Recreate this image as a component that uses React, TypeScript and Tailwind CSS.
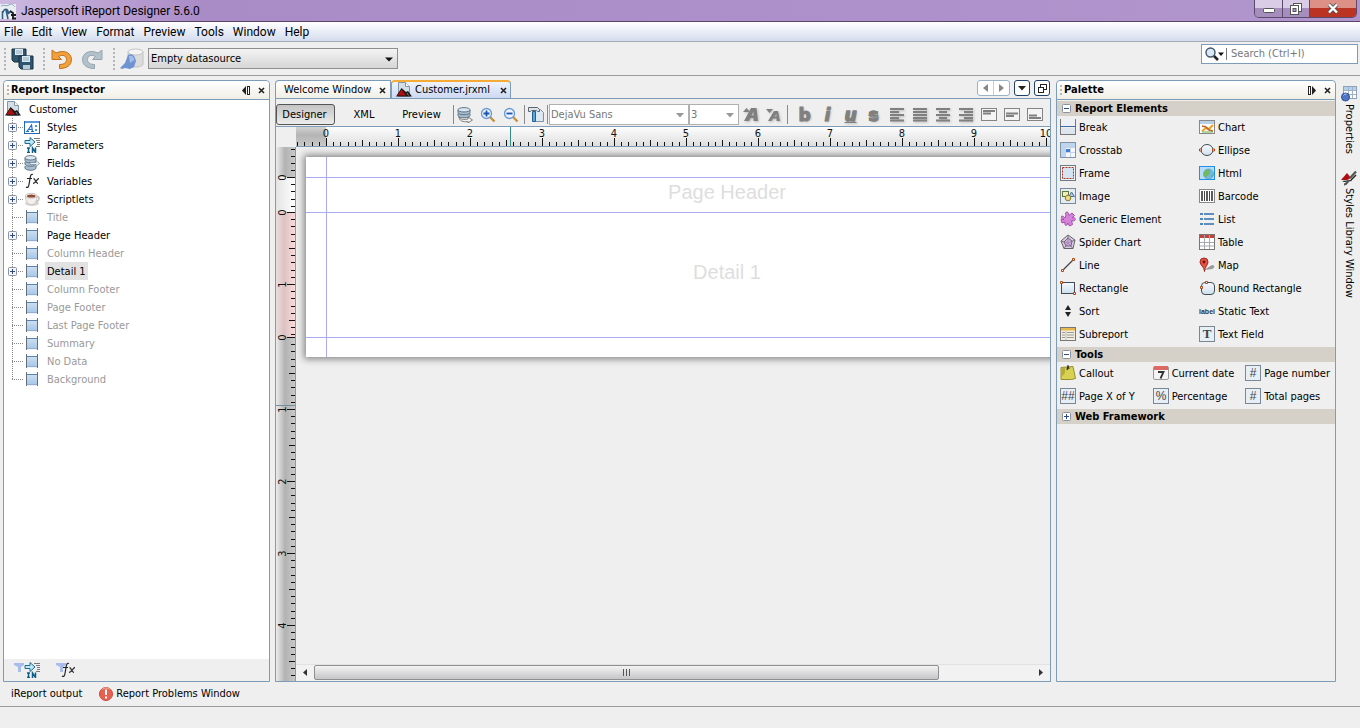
import React from 'react';
import clsx from 'clsx';

type IconName = string;

// 16x16 drawings, keyed by element name
const icons: Record<IconName, React.ReactNode> = {
  report: (
    <>
      <path d="M2.500 0.500h7l4 4v10h-11z" fill="#d3dee6" stroke="#8496a4" />
      <path d="M9.500 0.500v4h4" fill="#f8fafb" stroke="#8496a4" />
      <path d="M0 14.500L5.500 6l4.500 4 2-1 4 5.500z" fill="#1a1a1a" />
      <path d="M1.500 13.500L5.500 7.500l4.500 6z" fill="#b00d12" />
      <path d="M11 11l1.500 2.500" stroke="#888" />
    </>
  ),
  styles: (
    <>
      <rect x="0.500" y="2.500" width="15" height="12" fill="#fff" stroke="#2467b3" />
      <path d="M1 3h14" stroke="#5a9be0" strokeWidth="2" />
      <path d="M3 12.500l4.500-6.500 1 6.500M5 10.500h3M2 12.500h3M7 12.500h3" fill="none" stroke="#1d6fd0" strokeWidth="1.200" />
      <path d="M11 6h2v2h-2zM11 10h2v2h-2z" fill="#5a93d0" />
    </>
  ),
  params: (
    <>
      <path d="M1 3.500h5v-3l5 4.500-5 4.500v-3H1z" fill="#bfe6f5" stroke="#1c6c93" />
      <path d="M10 1.500h6M12 3.500h4M13 5.500h3M13 7.500h3M12 9.500h4" stroke="#777" />
      <path d="M4.500 10.500v5M3 11h3M3 15.500h3M8.500 16v-5l3 4.500v-5" fill="none" stroke="#0d5f85" strokeWidth="1.500" />
    </>
  ),
  fields: (
    <>
      <path d="M1 3v2.500c0 3 11 3 11 0V3M1 7v2c0 3 11 3 11 0V7M1 11v2c0 3 11 3 11 0v-2" fill="#a9bdcd" stroke="#5d7589" />
      <ellipse cx="6.500" cy="2.800" rx="5.500" ry="2.200" fill="#dce7ef" stroke="#5d7589" />
      <path d="M6 7.500h6V5.500l3.500 3-3.500 3v-2H6z" fill="#e9f0f5" stroke="#6d8599" strokeWidth="0.700" />
    </>
  ),
  query: (
    <>
      <path d="M1 3v2.500c0 3 12 3 12 0V3M1 6.500v2c0 3 12 3 12 0v-2" fill="#a9bdcd" stroke="#5d7589" />
      <ellipse cx="7" cy="2.800" rx="6" ry="2.200" fill="#dce7ef" stroke="#5d7589" />
      <path d="M2 10c1 2.500 5 3 9 2v-2l4.500 3-4.500 3v-1.500c-5 1-9-1-9-4.500z" fill="#eef2f5" stroke="#666" strokeWidth="0.800" />
    </>
  ),
  fx: (
    <>
      <path d="M9 1.500c-2-1-2.500 1-3 4l-1 6c-.5 3-1.500 3.500-3 2.500M3 5.500h5" fill="none" stroke="#222" strokeWidth="1.200" />
      <path d="M9.500 5.500c2 0 2 5 4.500 5M15 5.500c-2 0-3.500 5-6 5" fill="none" stroke="#333" strokeWidth="1.300" />
    </>
  ),
  cup: (
    <>
      <path d="M11 6c6-2 5 5-1 5" fill="none" stroke="#bbb" strokeWidth="1.500" />
      <ellipse cx="8" cy="12.500" rx="7" ry="2.500" fill="#d8d4d2" />
      <path d="M1.500 5c0 6 3 8.500 6 8.500S13 11 13 5z" fill="#f3f0ee" stroke="#cbc4c0" />
      <ellipse cx="7.300" cy="4.800" rx="5.800" ry="2.500" fill="#f3f0ee" stroke="#cbc4c0" />
      <ellipse cx="7.300" cy="5" rx="4.300" ry="1.600" fill="#8d4a35" />
    </>
  ),
  band: (
    <>
      <path d="M2 3h12v10H2z" fill="url(#blue)" />
      <path d="M2.500 1v14M13.500 1v14" stroke="#666e77" />
      <path d="M3 3.500h10" stroke="#5d83ad" />
      <path d="M3 13.500h10" stroke="#8fb0d4" />
      <path d="M3 2h10M3 14.500h10" stroke="#f1f3f6" />
    </>
  ),
  Break: (
    <>
      <rect x="1" y="0" width="14" height="7" fill="#edf0f4" />
      <rect x="1" y="9" width="14" height="6" fill="#dfe5ec" />
      <path d="M0.500 0v16M15.500 0v16M0 15.500h16" stroke="#777" />
      <path d="M0 7.500h16" stroke="#3c6ca8" />
    </>
  ),
  Crosstab: (
    <>
      <rect x="0.500" y="0.500" width="15" height="15" fill="#f4f8fc" stroke="#8193a5" />
      <path d="M1 1h14v4H1zM1 5h4v10H1z" fill="#bcd5f0" />
      <path d="M6 7h4v4H6z" fill="#3e7fd0" />
      <path d="M5.500 1v14M10.500 1v14M1 5.500h14M1 10.500h14" stroke="#c3d3e4" />
    </>
  ),
  Frame: (
    <>
      <rect x="0.500" y="0.500" width="15" height="15" fill="#eef3f8" stroke="#6e7a86" />
      <rect x="2.500" y="2.500" width="11" height="11" fill="#d5e4f3" stroke="#a8321e" strokeDasharray="2 1" />
    </>
  ),
  Image: (
    <>
      <rect x="0.500" y="0.500" width="15" height="15" fill="#e4edf5" stroke="#7d8995" />
      <rect x="2.500" y="3.500" width="6" height="5" fill="#f2ecb8" stroke="#60793b" />
      <path d="M9 8.500l2.500-4.500 3 4.500z" fill="#a8c7ea" stroke="#4c72a0" />
      <circle cx="8" cy="10" r="2.800" fill="#e8da86" stroke="#8a7a2c" />
    </>
  ),
  'Generic Element': (
    <path
      d="M6 4C4 1 8 0 8.500 2.500L9 4.500 12 2l2.500 2.500L12 7c3-1.500 5 2 1.500 3l-2-.5 1 4-3 1.500-1.500-3c-1 4-4 2.500-3-1l-3 1-1-4 3 .5C0 7 1 4 3.500 5.500L5 7z"
      fill="#d583d8"
      stroke="#a44fae"
    />
  ),
  'Spider Chart': (
    <>
      <path d="M8 1l7 5-2 8.500H4L1 7z" fill="#d8cfe0" stroke="#66606c" />
      <path d="M8 1v8l7-3M1 7l7 2-4 5.500M8 9l5 5.500" fill="none" stroke="#77717d" />
      <path d="M8 4l4 3-1 5H6L4 8z" fill="#c59ad0" fillOpacity="0.600" stroke="#7a5f85" />
    </>
  ),
  Line: (
    <>
      <path d="M2.500 13.500l11-11" stroke="#444" strokeWidth="1.200" />
      <path d="M1.500 12.500h2v2h-2zM12.500 1.500h2v2h-2z" fill="#fff" stroke="#b34614" />
    </>
  ),
  Rectangle: (
    <>
      <rect x="1.500" y="2.500" width="13" height="11" fill="url(#pale)" stroke="#444c55" />
      <path d="M0.500 1.500h2v2h-2zM13.500 12.500h2v2h-2z" fill="#fff" stroke="#b34614" />
    </>
  ),
  Sort: <path d="M8 2l3 5H5zM8 14l3-5H5z" fill="#222" />,
  Subreport: (
    <>
      <rect x="0.500" y="1.500" width="15" height="13" fill="#f3efdf" stroke="#777" />
      <path d="M1 2h14v2.500H1z" fill="#e8b84c" />
      <path d="M2 6.500h3M2 9h3M2 11.500h3M7 6.500h7M7 9h7M7 11.500h7" stroke="#999" />
      <path d="M6 5v9" stroke="#bbb" />
    </>
  ),
  Chart: (
    <>
      <rect x="0.500" y="1.500" width="15" height="13" fill="#fff" stroke="#888" />
      <path d="M1 2h14v3H1z" fill="#b9cfe6" />
      <path d="M3 12l4-3 3 1 4-4" fill="none" stroke="#f0a020" strokeWidth="2" />
      <path d="M3 7l4 1 3 3 4 1" fill="none" stroke="#c9601c" strokeWidth="1.500" />
      <path d="M3 13h11" stroke="#6ca644" />
    </>
  ),
  Ellipse: (
    <>
      <ellipse cx="8" cy="8" rx="6" ry="5.500" fill="url(#pale)" stroke="#444c55" />
      <path d="M0.500 7h2v2h-2zM13.500 7h2v2h-2z" fill="#fff" stroke="#b34614" />
    </>
  ),
  Html: (
    <>
      <rect x="0.500" y="1.500" width="15" height="13" fill="#b7dcfa" stroke="#1e8ff0" />
      <circle cx="9.500" cy="9" r="5" fill="#74b8ea" stroke="#5a9f9a" strokeWidth="0.700" />
      <path d="M7 5c3-1 5 0 4 3s-3 2-4 5c-3-2-3-6 0-8zM12 9l2 1-2 3z" fill="#6fb95f" />
    </>
  ),
  Barcode: (
    <>
      <rect x="0.500" y="1.500" width="15" height="13" fill="#fff" stroke="#888" />
      <path d="M3 3v10M8 3v10M13 3v10" stroke="#333" strokeWidth="1.600" />
      <path d="M5.500 3v10M10.500 3v10" stroke="#444" />
    </>
  ),
  List: (
    <>
      <path d="M1 3h3M1 8h3M1 13h3" stroke="#4a86c5" strokeWidth="2" />
      <path d="M5 3h10M5 8h10M5 13h10" stroke="#2f6fae" strokeWidth="1.500" />
    </>
  ),
  Table: (
    <>
      <rect x="0.500" y="0.500" width="15" height="15" fill="#fff" stroke="#777" />
      <path d="M1 1h14v3H1z" fill="#c4423c" />
      <path d="M5.500 1v14M10.500 1v14M1 8.500h14M1 12h14" stroke="#a5abb5" />
    </>
  ),
  Map: (
    <>
      <path d="M5 13l8-5c3 0 3 3 0 4z" fill="#999" />
      <path d="M5.500 14.500C5.500 10 1 8 1 5a4 4 0 0 1 8 0c0 3-3.500 5-3.500 9.500z" fill="#e8503f" stroke="#9c2b20" />
      <circle cx="5" cy="5" r="1.400" fill="#6b120b" />
    </>
  ),
  'Round Rectangle': (
    <>
      <rect x="2.500" y="2.500" width="13" height="12" rx="3.500" fill="url(#pale)" stroke="#444c55" />
      <path d="M6.500 1.500h2v2h-2zM1.500 6.500h2v2h-2z" fill="#fff" stroke="#b34614" />
    </>
  ),
  'Static Text': (
    <text x="8" y="11" fontSize="7" textAnchor="middle" fill="#333" className="font-['Liberation_Sans',sans-serif] font-bold">
      label
    </text>
  ),
  'Text Field': <Glyph text="T" serif />,
  Callout: (
    <>
      <path d="M1 2.500l12-1 2.500 12-4 1H1z" fill="#d9d152" stroke="#96902c" />
      <path d="M1.500 3l3.500-.4V8l-3.500 4z" fill="#b5ad36" />
      <path d="M7 5l1-4 1 3" fill="none" stroke="#333" strokeWidth="1.300" />
    </>
  ),
  'Current date': (
    <>
      <rect x="0.500" y="1.500" width="15" height="13" rx="1.500" fill="#f4f4f4" stroke="#999" />
      <path d="M1 1h14v4H1z" fill="#dd6a62" />
      <path d="M5 7h5.500L7.500 13.500" fill="none" stroke="#333" strokeWidth="1.800" />
    </>
  ),
  'Page number': <Glyph text="#" />,
  'Page X of Y': <Glyph text="##" />,
  Percentage: <Glyph text="%" />,
  'Total pages': <Glyph text="#" />,
  alert: (
    <>
      <circle cx="8" cy="8" r="6.500" fill="#e8604f" stroke="#c94a3d" />
      <path d="M4 3.500a6 6 0 0 1 8 0" fill="none" stroke="#f5a99e" />
      <path d="M8 3.500v5.500M8 10.500v2" stroke="#fff" strokeWidth="2" />
    </>
  ),
  properties: (
    <>
      <rect x="2.500" y="0.500" width="13" height="12" fill="#fff" stroke="#8ea3b8" />
      <path d="M3 1h12v3H3z" fill="#b7d0ea" />
      <path d="M7.500 1v11M11.500 1v11M3 4.500h12M3 8.500h12" stroke="#9fb3c8" />
      <circle cx="4.500" cy="11" r="4" fill="#4f76c4" stroke="#2e4f96" />
      <path d="M2.500 9.500a3 3 0 0 1 3-1.500" stroke="#b8ccef" fill="none" />
    </>
  ),
  brush: (
    <>
      <path d="M0 10l6-7 4 5-4 2z" fill="#b00d12" />
      <path d="M1 11l9-1 1 1-8 1z" fill="#222" />
      <path d="M15 1.500L9 8M3 14.500c3 0 3-3 5-4" fill="none" stroke="#555" strokeWidth="2.200" />
      <path d="M15 5l-5 5" stroke="#222" strokeWidth="1.500" />
    </>
  ),
  zoomIn: <Lens plus />,
  zoomOut: <Lens />,
  hammer: (
    <>
      <path d="M6.500 2.500h6l3 3v9h-9z" fill="#dce7f1" stroke="#7e90a3" />
      <path d="M0.500 0.500h9l2 2v2h-2l-1-1h-5l-1 1h-2z" fill="#dfe3e6" stroke="#5c6670" />
      <path d="M4.500 4.500h3v10h-3z" fill="#58a7de" stroke="#23618f" />
    </>
  ),
};

function Glyph({ text, serif }: { text: string; serif?: boolean }) {
  return (
    <>
      <rect x="0.500" y="0.500" width="15" height="15" fill="#e6eef6" stroke="#7b8794" />
      <text
        x="8"
        y="12"
        fontSize={serif ? 13 : 12}
        textAnchor="middle"
        fill="#444"
        className={serif ? "font-['Liberation_Serif',serif] font-bold" : "font-['Liberation_Sans',sans-serif]"}
      >
        {text}
      </text>
    </>
  );
}

function Lens({ plus }: { plus?: boolean }) {
  return (
    <>
      <path d="M10 10l4.500 4.500" stroke="#c9913c" strokeWidth="2.400" />
      <circle cx="6.500" cy="6.500" r="5" fill="#eaf3ff" stroke="#6c98d6" strokeWidth="1.300" />
      <path d={plus ? 'M3.500 6.500h6M6.500 3.500v6' : 'M3.500 6.500h6'} stroke="#1c55ad" strokeWidth="1.800" />
    </>
  );
}

function Icon({ name }: { name: IconName }) {
  return (
    <svg width="16" height="16" viewBox="0 0 16 16" className="shrink-0" aria-hidden="true">
      {icons[name]}
    </svg>
  );
}

const menu = ['File', 'Edit', 'View', 'Format', 'Preview', 'Tools', 'Window', 'Help'];

const tree = [
  { label: 'Styles', icon: 'styles', open: true },
  { label: 'Parameters', icon: 'params', open: true },
  { label: 'Fields', icon: 'fields', open: true },
  { label: 'Variables', icon: 'fx', open: true },
  { label: 'Scriptlets', icon: 'cup', open: true },
  { label: 'Title', icon: 'band' },
  { label: 'Page Header', icon: 'band', open: true },
  { label: 'Column Header', icon: 'band' },
  { label: 'Detail 1', icon: 'band', open: true, selected: true },
  { label: 'Column Footer', icon: 'band' },
  { label: 'Page Footer', icon: 'band' },
  { label: 'Last Page Footer', icon: 'band' },
  { label: 'Summary', icon: 'band' },
  { label: 'No Data', icon: 'band' },
  { label: 'Background', icon: 'band' },
];

const elements = [
  'Break', 'Chart', 'Crosstab', 'Ellipse', 'Frame', 'Html', 'Image', 'Barcode', 'Generic Element', 'List',
  'Spider Chart', 'Table', 'Line', 'Map', 'Rectangle', 'Round Rectangle', 'Sort', 'Static Text', 'Subreport', 'Text Field',
];

const tools = ['Callout', 'Current date', 'Page number', 'Page X of Y', 'Percentage', 'Total pages'];

function Grip({ className }: { className?: string }) {
  return <span className={clsx('w-0 border-l-2 border-dotted border-[#b4b4b4]', className)} />;
}

function CloseX() {
  return (
    <svg width="7" height="7" viewBox="0 0 7 7" aria-hidden="true">
      <path d="M1 1l5 5M6 1L1 6" stroke="#222" strokeWidth="1.600" />
    </svg>
  );
}

function PanelHeader({ title, flip }: { title: string; flip?: boolean }) {
  return (
    <header className="flex h-[19px] shrink-0 items-center rounded-t border-b border-[#7c9cb8] bg-linear-to-b from-white to-[#f0efe6] pr-1 pl-[3px]">
      <Grip className="h-2.5" />
      <h2 className="ml-0.5 flex-1 text-[11px] font-bold text-black">{title}</h2>
      <button type="button" aria-label="Minimize" className="mr-2">
        <svg width="8" height="9" viewBox="0 0 8 9" className={clsx(flip && 'rotate-180')}>
          <path d="M4 0v9L0 4.500z" fill="#222" />
          <rect x="5.500" y="0.500" width="2" height="8" fill="#fff" stroke="#222" />
        </svg>
      </button>
      <button type="button" aria-label={`Close ${title}`}>
        <CloseX />
      </button>
    </header>
  );
}

function TitleBar() {
  return (
    <div className="flex h-[22px] shrink-0 items-center border-b border-[#574468] bg-linear-to-r from-[#cdb9e0] via-[#a98bc6] via-15% to-[#b195cd]">
      <svg width="18" height="20" viewBox="0 0 18 20" className="shrink-0" aria-hidden="true">
        <path d="M0 3h16v15H0z" fill="#e8edf2" />
        <path d="M2.500 10v8M2.500 12c2-5 5-5 6 0M6 9l2 9M8 13l3-3" fill="none" stroke="#2f5f83" strokeWidth="1.600" />
        <path d="M10 10l3 2v6M11 14h5M12 17.500h4" fill="none" stroke="#1b1b1b" strokeWidth="1.800" />
        <path d="M1 5c3-2 5 1 8-1s4 0 6 2" fill="none" stroke="#8aa7bf" />
      </svg>
      <h1 className="ml-[3px] flex-1 font-[Roboto,'Noto_Sans',sans-serif] text-[12px] text-black">
        Jaspersoft iReport Designer 5.6.0
      </h1>
      <div className="mr-[3px] flex h-[18px] self-start overflow-hidden rounded-b-[5px] border border-t-0 border-[#5b4a6c]">
        <button type="button" aria-label="Minimize window" className="flex w-7 items-center justify-center border-r border-[#5b4a6c] bg-linear-to-b from-[#d9cce6] from-50% to-[#a58dbd] to-50%">
          <svg width="12" height="5" viewBox="0 0 12 5" className="mt-1">
            <rect x="0.500" y="0.500" width="11" height="4" rx="1" fill="#fff" stroke="#555" />
          </svg>
        </button>
        <button type="button" aria-label="Restore window" className="flex w-[27px] items-center justify-center border-r border-[#5b4a6c] bg-linear-to-b from-[#d9cce6] from-50% to-[#a58dbd] to-50%">
          <svg width="12" height="12" viewBox="0 0 12 12">
            <rect x="3.500" y="0.500" width="8" height="8" fill="#fff" stroke="#555" />
            <rect x="0.500" y="2.500" width="8" height="9" fill="#fff" stroke="#555" />
            <rect x="3" y="5.500" width="3" height="3" fill="#b09ac7" stroke="#555" />
          </svg>
        </button>
        <button type="button" aria-label="Close window" className="flex w-[46px] items-center justify-center bg-linear-to-b from-[#dd9186] from-50% to-[#bb3322] to-50%">
          <svg width="12" height="11" viewBox="0 0 12 11">
            <path d="M2 1.500l8 8M10 1.500l-8 8" stroke="#555" strokeWidth="4" />
            <path d="M2 1.500l8 8M10 1.500l-8 8" stroke="#fff" strokeWidth="2.400" />
          </svg>
        </button>
      </div>
    </div>
  );
}

function MainToolbar() {
  return (
    <div className="flex h-[34px] shrink-0 items-center border-b border-[#9b9b9b] pr-0.5 pl-1">
      <Grip className="h-[22px]" />
      <button type="button" aria-label="Save all" className="ml-[5px]">
        <svg width="23" height="22" viewBox="0 0 23 22">
          <path d="M1 1h14v13H3l-2-2z" fill="#31556f" stroke="#16303f" />
          <path d="M4 1h8v6H4z" fill="#dce9f1" />
          <path d="M5 3h6M5 5h6" stroke="#8fb0c4" />
          <path d="M8 8h14v13H10l-2-2z" fill="#31556f" stroke="#16303f" />
          <path d="M11 8h8v6h-8z" fill="#dce9f1" />
          <path d="M12 10h6M12 12h6" stroke="#8fb0c4" />
          <path d="M12 17h7v4h-7z" fill="#b6c9d5" />
        </svg>
      </button>
      <Grip className="ml-[9px] h-[22px]" />
      <button type="button" aria-label="Undo" className="ml-1.5">
        <svg width="22" height="22" viewBox="0 0 22 22">
          <path d="M1 2v9.500h9.500L7.500 8.500c4.500-2.500 8-.5 8 3s-3 5-7 5v4c7 0 12-3 12-9S14 1 5 5z" fill="#f0a13c" stroke="#c2711a" />
        </svg>
      </button>
      <button type="button" aria-label="Redo" className="ml-[8px]">
        <svg width="22" height="22" viewBox="0 0 22 22">
          <path d="M21 2v9.500h-9.500l3-3c-4.500-2.500-8-.5-8 3s3 5 7 5v4c-7 0-12-3-12-9S8 1 17 5z" fill="#b3c1ca" stroke="#95a5b0" />
        </svg>
      </button>
      <Grip className="ml-[10px] h-[22px]" />
      <button type="button" aria-label="Report datasources" className="ml-[5px]">
        <svg width="24" height="22" viewBox="0 0 24 22">
          <path d="M8 4v12c0 4 15 4 15 0V4z" fill="#dcdcdc" stroke="#c2c2c2" />
          <ellipse cx="15.500" cy="4" rx="7.500" ry="3" fill="#f4f4f4" stroke="#c2c2c2" />
          <path d="M0 20l5-5 3-8c4-2 7 1 8 6l-2 6-4 2-5-1-3 1z" fill="#6e93d3" />
          <path d="M9 8c3-1 5 1 5.500 4L10 15z" fill="#a5bee9" />
        </svg>
      </button>
      <span className="relative ml-1 w-[250px]">
        <select aria-label="Datasource" className="block h-[21px] w-full appearance-none border border-[#8f8f8f] bg-linear-to-b from-[#f4f4f4] to-[#d6d6d6] pl-0.5 text-[11px] text-black">
          <option>Empty datasource</option>
        </select>
        <svg width="8" height="5" viewBox="0 0 8 5" className="pointer-events-none absolute top-[9px] right-[5px]">
          <path d="M0 0.500h8L4 4.500z" fill="#111" />
        </svg>
      </span>
      <label className="mb-2.5 ml-auto flex h-5 w-[157px] items-center border border-[#7c9cb8] bg-white">
        <svg width="25" height="18" viewBox="0 0 25 18" className="shrink-0" aria-hidden="true">
          <circle cx="8.500" cy="7.500" r="4.500" fill="#dbe9f5" stroke="#3f566b" strokeWidth="1.400" />
          <path d="M12 11l4 4" stroke="#222" strokeWidth="2.500" />
          <path d="M16 7.500h6L19 11z" fill="#111" />
          <path d="M24.500 3v12" stroke="#777" />
        </svg>
        <input type="search" aria-label="Search" placeholder="Search (Ctrl+I)" className="w-full min-w-0 pl-1 font-['DejaVu_Sans_Condensed','DejaVu_Sans',sans-serif] text-[11px] placeholder:text-[#777] focus:outline-none" />
      </label>
    </div>
  );
}

function Inspector() {
  return (
    <aside className="flex w-[267px] shrink-0 flex-col rounded-t border border-[#7c9cb8] bg-white">
      <PanelHeader title="Report Inspector" />
      <div className="flex-1">
        <div className="flex h-[18px] items-center gap-2 pl-px text-black">
          <Icon name="report" />
          <span className="pt-0.5">Customer</span>
        </div>
        <ul>
          {tree.map((node, i) => (
            <li key={node.label} className="flex h-[18px] items-center">
              <svg width="20" height="18" viewBox="0 0 20 18" className="shrink-0" aria-hidden="true">
                <path d={i === tree.length - 1 ? 'M8.500 0v9' : 'M8.500 0v18'} stroke="#888" strokeDasharray="1 1" />
                <path d="M8 9.500h12" stroke="#888" strokeDasharray="1 1" />
                {node.open && (
                  <>
                    <rect x="4.500" y="5.500" width="8" height="8" rx="1" fill="#f3f5f8" stroke="#8a94a0" />
                    <path d="M6 9.500h5M8.500 7v5" stroke="#2c4a86" />
                  </>
                )}
              </svg>
              <Icon name={node.icon} />
              <span
                className={clsx(
                  'ml-[5px] px-0.5 pt-0.5 leading-[16px]',
                  node.open ? 'text-black' : 'text-[#999]',
                  node.selected && 'bg-[#e2e2e2]',
                )}
              >
                {node.label}
              </span>
            </li>
          ))}
        </ul>
      </div>
      <div className="flex h-[22px] items-center gap-4 bg-[#efefef] pl-2.5">
        <button type="button" aria-label="Filter parameters" className="flex">
          <Funnel />
          <Icon name="params" />
        </button>
        <button type="button" aria-label="Filter variables" className="flex">
          <Funnel />
          <span className="-ml-1.5">
            <Icon name="fx" />
          </span>
        </button>
      </div>
    </aside>
  );
}

function Funnel() {
  return (
    <svg width="10" height="16" viewBox="0 0 10 16" aria-hidden="true">
      <path d="M0 1h10v2L7 5v5H4V5L0 3z" fill="#a9bdec" />
    </svg>
  );
}

const bands = [
  { label: '', height: 'h-[21px]' },
  { label: 'Page Header', height: 'h-[35px]' },
  { label: 'Detail 1', height: 'h-[125px]' },
];

function HRuler() {
  const ticks = Array.from({ length: 105 }, (_, i) => i - 4);
  return (
    <svg width="100%" height="20" className="block min-w-0 flex-1 border-b border-[#7c9cb8] bg-linear-to-b from-[#fdfdfd] to-[#dedede]" aria-hidden="true">
      <rect width="30" height="20" fill="url(#shade)" />
      {ticks.map((t) => {
        const x = Math.round(30 + t * 7.2) + 0.5;
        const top = t % 10 === 0 ? 11 : t % 5 === 0 ? 13 : 15;
        return <path key={t} d={`M${x} ${top}V19`} stroke="#111" />;
      })}
      {Array.from({ length: 11 }, (_, n) => (
        <text key={n} x={30 + n * 72} y="10" fontSize="11" textAnchor="middle" fill="#111">
          {n}
        </text>
      ))}
      <path d="M214.500 0v20" stroke="#2f8f86" />
    </svg>
  );
}

// each zone restarts its own count at the top of a band
const zones = [
  { start: 30, end: 65 },
  { start: 65, end: 190 },
  { start: 190, end: 534 },
];

function VRuler() {
  return (
    <svg width="20" height="100%" className="block border-r border-[#7c9cb8]" aria-hidden="true">
      <rect width="20" height="100%" fill="url(#side)" />
      <rect y="30" width="20" height="35" fill="url(#sideLight)" />
      <rect y="65" width="20" height="125" fill="url(#sidePink)" />
      <path d="M15 9.500h4M15 16.500h4M15 23.500h4M15 2.500h4" stroke="#111" />
      {zones.map(({ start, end }) =>
        Array.from({ length: Math.ceil((end - start) / 7.2) }, (_, t) => {
          const y = Math.round(start + t * 7.2) + 0.5;
          const left = t % 10 === 0 ? 11 : t % 5 === 0 ? 13 : 15;
          return (
            <React.Fragment key={`${start}-${t}`}>
              <path d={`M${left} ${y}H19`} stroke="#111" />
              {t % 10 === 0 && (
                <text transform={`translate(10 ${y}) rotate(-90)`} fontSize="11" textAnchor="middle" fill="#111">
                  {t / 10}
                </text>
              )}
            </React.Fragment>
          );
        }),
      )}
      <path d="M0 258.500h20" stroke="#6f8f9f" />
    </svg>
  );
}

const separator = <span className="h-[19px] w-px shrink-0 bg-[#8a8a8a]" />;

const letters = [
  { label: 'Bold', glyph: 'b', style: '' },
  { label: 'Italic', glyph: 'i', style: 'italic' },
  { label: 'Underline', glyph: 'u', style: 'italic underline' },
  { label: 'Strikethrough', glyph: 's', style: 'line-through' },
];

const aligns = [
  { label: 'Align left', d: 'M0 2h14M0 5h9M0 8h14M0 11h9M0 13.500h14' },
  { label: 'Justify', d: 'M0 2h14M0 5h14M0 8h14M0 11h14M0 13.500h14' },
  { label: 'Align center', d: 'M0 2h14M3 5h8M0 8h14M3 11h8M0 13.500h14' },
  { label: 'Align right', d: 'M0 2h14M5 5h9M0 8h14M5 11h9M0 13.500h14' },
];

const vAligns = [
  { label: 'Align top', d: 'M2 4h12M2 6.500h8' },
  { label: 'Align middle', d: 'M2 6.500h12M2 9h8' },
  { label: 'Align bottom', d: 'M2 8.500h8M2 11h12' },
];

function FontSelect({ label, value, width }: { label: string; value: string; width: string }) {
  return (
    <span className={clsx('relative shrink-0', width)}>
      <select disabled aria-label={label} className="block h-[21px] w-full appearance-none border border-[#b0b0b0] bg-white pl-px text-[11px] text-[#777]">
        <option>{value}</option>
      </select>
      <svg width="8" height="5" viewBox="0 0 8 5" className="pointer-events-none absolute top-[9px] right-[5px]">
        <path d="M0 0h8L4 4.500z" fill="#999" />
      </svg>
    </span>
  );
}

function EditorToolbar() {
  return (
    <div className="flex h-[28px] shrink-0 items-center overflow-hidden border-b border-[#7c9cb8] pt-1">
      <button type="button" className="h-[21px] w-[59px] shrink-0 rounded-[3px] border border-[#555] bg-linear-to-b from-[#c4c4c4] to-[#ececec] pr-0.5 text-black">
        Designer
      </button>
      <button type="button" className="w-[58px] shrink-0 text-black">XML</button>
      <button type="button" className="mr-[3px] w-[57px] shrink-0 text-black">Preview</button>
      {separator}
      <div className="mx-[3px] flex gap-[7px]">
        <button type="button" aria-label="Report query"><Icon name="query" /></button>
        <button type="button" aria-label="Zoom in"><Icon name="zoomIn" /></button>
        <button type="button" aria-label="Zoom out"><Icon name="zoomOut" /></button>
      </div>
      <span className="ml-0.5 flex items-center gap-[3px]">
        {separator}
        <button type="button" aria-label="Format tools"><Icon name="hammer" /></button>
        {separator}
      </span>
      <span className="ml-px flex">
        <FontSelect label="Font" value="DejaVu Sans" width="w-[140px]" />
        <FontSelect label="Font size" value="3" width="w-[50px]" />
      </span>
      <button type="button" aria-label="Increase font size" className="ml-1 drop-shadow-[1px_1px_1px_#bbb]">
        <svg width="16" height="15" viewBox="0 0 16 15">
          <path d="M1 14L8 1h5.500l1.500 13h-4.500v-3H7.500l-1.500 3zM8.500 8.500h2V4.500z" fill="#808080" />
          <path d="M0 5l3.500-4L7 5z" fill="#808080" />
        </svg>
      </button>
      <button type="button" aria-label="Decrease font size" className="ml-[7px] drop-shadow-[1px_1px_1px_#bbb]">
        <svg width="15" height="15" viewBox="0 0 15 15">
          <path d="M2 14L8 4h4l2 10h-3.500v-2.500H7L5.500 14zM8.500 9.500h2V7z" fill="#808080" />
          <path d="M0 2h7L3.500 6z" fill="#808080" />
        </svg>
      </button>
      <span className="ml-[6px] flex items-center gap-[5px]">
        {separator}
        <span className="flex items-center">
          {letters.map((l) => (
            <button
              key={l.label}
              type="button"
              aria-label={l.label}
              className={clsx(
                "h-5 w-[23px] font-['DejaVu_Sans',sans-serif] text-[17px] leading-5 font-bold text-[#808080] [-webkit-text-stroke:1px_#808080] [text-shadow:1px_1px_2px_#aaa]",
                l.style,
              )}
            >
              {l.glyph}
            </button>
          ))}
          {aligns.map((a) => (
            <button key={a.label} type="button" aria-label={a.label} className="flex w-[23px] justify-center drop-shadow-[1px_1px_1px_#bbb]">
              <svg width="14" height="15" viewBox="0 0 14 15">
                <path d={a.d} stroke="#808080" strokeWidth="1.800" />
              </svg>
            </button>
          ))}
          {vAligns.map((a) => (
            <button key={a.label} type="button" aria-label={a.label} className="flex w-[23px] justify-center">
              <svg width="16" height="15" viewBox="0 0 16 15">
                <rect x="0.500" y="1.500" width="15" height="12" fill="#f4f4f4" stroke="#858585" />
                <path d={a.d} stroke="#808080" strokeWidth="1.800" />
              </svg>
            </button>
          ))}
        </span>
      </span>
    </div>
  );
}

function Editor() {
  return (
    <main className="flex min-w-0 flex-1 flex-col">
      <div className="flex h-[18px] shrink-0 text-black">
        <div className="flex w-[116px] items-center justify-between rounded-tl border border-b-0 border-[#7c9cb8] bg-linear-to-b from-white to-[#f0efe6] pt-px pr-1 pl-2">
          Welcome Window
          <button type="button" aria-label="Close Welcome Window"><CloseX /></button>
        </div>
        <div className="flex w-[120px] items-center gap-[3px] rounded-t border border-t-2 border-b-0 border-[#7c9cb8] border-t-[#f5ab35] bg-linear-to-b from-[#eef3fb] to-[#cdd9f3] pr-[3px] pl-1">
          <Icon name="report" />
          <span className="flex-1">Customer.jrxml</span>
          <button type="button" aria-label="Close Customer.jrxml"><CloseX /></button>
        </div>
        <div className="ml-auto flex h-4 gap-1 pr-px">
          <div className="flex rounded-[3px] border border-[#9bb2c6] bg-white">
            <button type="button" aria-label="Scroll tabs left" className="flex w-4 items-center justify-center border-r border-[#ccc]">
              <svg width="5" height="8" viewBox="0 0 5 8"><path d="M5 0v8L0 4z" fill="#888" /></svg>
            </button>
            <button type="button" aria-label="Scroll tabs right" className="flex w-[15px] items-center justify-center">
              <svg width="5" height="8" viewBox="0 0 5 8"><path d="M0 0v8l5-4z" fill="#888" /></svg>
            </button>
          </div>
          <button type="button" aria-label="Show opened documents" className="flex w-4 items-center justify-center rounded-[3px] border border-[#1f4068] bg-white">
            <svg width="8" height="5" viewBox="0 0 8 5"><path d="M0 0h8L4 4.500z" fill="#222" /></svg>
          </button>
          <button type="button" aria-label="Maximize" className="flex w-4 items-center justify-center rounded-[3px] border border-[#1f4068] bg-white">
            <svg width="9" height="9" viewBox="0 0 9 9" fill="#fff" stroke="#222">
              <rect x="2.500" y="0.500" width="6" height="5" />
              <rect x="0.500" y="3.500" width="5" height="5" />
            </svg>
          </button>
        </div>
      </div>
      <section className="flex min-h-0 flex-1 flex-col border border-[#7c9cb8]">
        <EditorToolbar />
        <div className="flex h-5 shrink-0 pl-5">
          <HRuler />
        </div>
        <div className="flex min-h-0 flex-1">
          <div className="w-5 shrink-0 overflow-hidden">
            <VRuler />
          </div>
          <div className="flex min-w-0 flex-1 flex-col">
            <div className="min-h-0 flex-1 overflow-hidden pt-2.5 pl-2.5">
              <div className="flex h-[200px] w-[842px] flex-col bg-white shadow-[0_0_7px_2px_rgba(0,0,0,0.45)]">
                <div className="ml-5 flex flex-1 flex-col border-l border-[#aaaaf5]">
                  {bands.map((band) => (
                    <div
                      key={band.height}
                      className={clsx(
                        "-ml-[21px] flex items-center justify-center border-b border-[#aaaaf5] pb-1.5 font-['Liberation_Sans',Arial,sans-serif] text-[20px] text-[#dedede]",
                        band.height,
                      )}
                    >
                      {band.label}
                    </div>
                  ))}
                </div>
              </div>
            </div>
            <div className="flex h-[17px] shrink-0 items-start border-t border-[#e2e2e2] bg-[#f2f2f2]">
              <button type="button" aria-label="Scroll left" className="flex h-[15px] w-[18px] items-center justify-center">
                <svg width="4" height="7" viewBox="0 0 4 7"><path d="M4 0v7L0 3.500z" fill="#333" /></svg>
              </button>
              <div className="flex-1">
                <div className="flex h-[15px] w-[87%] items-center justify-center gap-0.5 rounded-[2px] border border-[#8f8f8f] bg-linear-to-b from-[#f3f3f3] to-[#c6c6c9]">
                  <span className="h-[7px] w-px bg-[#555]" />
                  <span className="h-[7px] w-px bg-[#555]" />
                  <span className="h-[7px] w-px bg-[#555]" />
                </div>
              </div>
              <button type="button" aria-label="Scroll right" className="flex h-[15px] w-[18px] items-center justify-center">
                <svg width="4" height="7" viewBox="0 0 4 7"><path d="M0 0v7l4-3.500z" fill="#333" /></svg>
              </button>
            </div>
          </div>
        </div>
      </section>
    </main>
  );
}

function SectionHeader({ title, collapsed }: { title: string; collapsed?: boolean }) {
  return (
    <button type="button" className="mt-px flex h-[15px] w-full items-center gap-1 bg-[#d5d1c8] pl-[5px] text-left font-bold text-black">
      <svg width="9" height="9" viewBox="0 0 9 9" aria-hidden="true">
        <rect x="0.500" y="0.500" width="8" height="8" rx="1" fill="#fff" stroke="#8a94a0" />
        <path d={collapsed ? 'M2 4.500h5M4.500 2v5' : 'M2 4.500h5'} stroke="#2c4a86" />
      </svg>
      {title}
    </button>
  );
}

function PaletteItem({ name }: { name: string }) {
  return (
    <button type="button" className="flex h-[23px] items-center gap-[3px] pb-px pl-[3px] whitespace-nowrap text-black">
      <Icon name={name} />
      <span className="pt-px">{name}</span>
    </button>
  );
}

function Palette() {
  return (
    <aside className="flex w-[280px] shrink-0 flex-col rounded-t border border-[#7c9cb8]">
      <PanelHeader title="Palette" flip />
      <SectionHeader title="Report Elements" />
      <div className="grid grid-cols-2">
        {elements.map((name) => (
          <PaletteItem key={name} name={name} />
        ))}
      </div>
      <SectionHeader title="Tools" />
      <div className="grid grid-cols-3">
        {tools.map((name) => (
          <PaletteItem key={name} name={name} />
        ))}
      </div>
      <SectionHeader title="Web Framework" collapsed />
    </aside>
  );
}

function SideTabs() {
  return (
    <nav className="flex w-[19px] shrink-0 flex-col items-center gap-4 pt-1.5 pr-1 text-black">
      <button type="button" className="flex flex-col items-center gap-0.5">
        <Icon name="properties" />
        <span className="[writing-mode:vertical-rl]">Properties</span>
      </button>
      <button type="button" className="flex flex-col items-center gap-0.5">
        <Icon name="brush" />
        <span className="[writing-mode:vertical-rl]">Styles Library Window</span>
      </button>
    </nav>
  );
}

// gradients shared by every drawing on the page
function Gradients() {
  return (
    <svg width="0" height="0" className="absolute" aria-hidden="true">
      <defs>
        <linearGradient id="blue" x1="0" y1="0" x2="0" y2="1">
          <stop offset="0" stopColor="#cfe1f2" />
          <stop offset="1" stopColor="#a9c8e8" />
        </linearGradient>
        <linearGradient id="pale" x1="0" y1="0" x2="0" y2="1">
          <stop offset="0" stopColor="#f6fafd" />
          <stop offset="1" stopColor="#cfdfed" />
        </linearGradient>
        <linearGradient id="shade" x1="0" y1="0" x2="0" y2="1">
          <stop offset="0" stopColor="#d2d2d2" />
          <stop offset="0.400" stopColor="#b4b4b4" />
          <stop offset="1" stopColor="#cbcbcb" />
        </linearGradient>
        <linearGradient id="side">
          <stop offset="0" stopColor="#ececec" />
          <stop offset="0.450" stopColor="#b2b2b2" />
          <stop offset="1" stopColor="#cbcbcb" />
        </linearGradient>
        <linearGradient id="sideLight">
          <stop offset="0" stopColor="#e4e4e4" />
          <stop offset="1" stopColor="#ffffff" />
        </linearGradient>
        <linearGradient id="sidePink">
          <stop offset="0" stopColor="#eadede" />
          <stop offset="0.400" stopColor="#ddc2c2" />
          <stop offset="1" stopColor="#fcdcdc" />
        </linearGradient>
      </defs>
    </svg>
  );
}

export default function App() {
  return (
    <div className="flex h-screen flex-col overflow-hidden bg-[#efefef] font-['DejaVu_Sans_Condensed','DejaVu_Sans',Tahoma,sans-serif] text-[11px] leading-[14px]">
      <Gradients />
      <TitleBar />
      <nav className="flex h-5 shrink-0 items-center gap-[9px] border-b border-[#a3a9b5] bg-linear-to-b from-white to-[#d5dcee] pl-1 font-[Roboto,'Noto_Sans',sans-serif] text-[12px] text-black">
        {menu.map((item) => (
          <button key={item} type="button">
            {item}
          </button>
        ))}
      </nav>
      <MainToolbar />
      <div className="flex min-h-0 flex-1 gap-[5px] pt-1 pl-[3px]">
        <Inspector />
        <Editor />
        <Palette />
        <SideTabs />
      </div>
      <div className="flex h-[25px] shrink-0 items-center gap-4 border-b border-[#9b9b9b] pl-[11px] text-black">
        <button type="button">iReport output</button>
        <button type="button" className="flex items-center gap-0.5">
          <Icon name="alert" />
          Report Problems Window
        </button>
      </div>
      <footer className="h-[21px] shrink-0" />
    </div>
  );
}
